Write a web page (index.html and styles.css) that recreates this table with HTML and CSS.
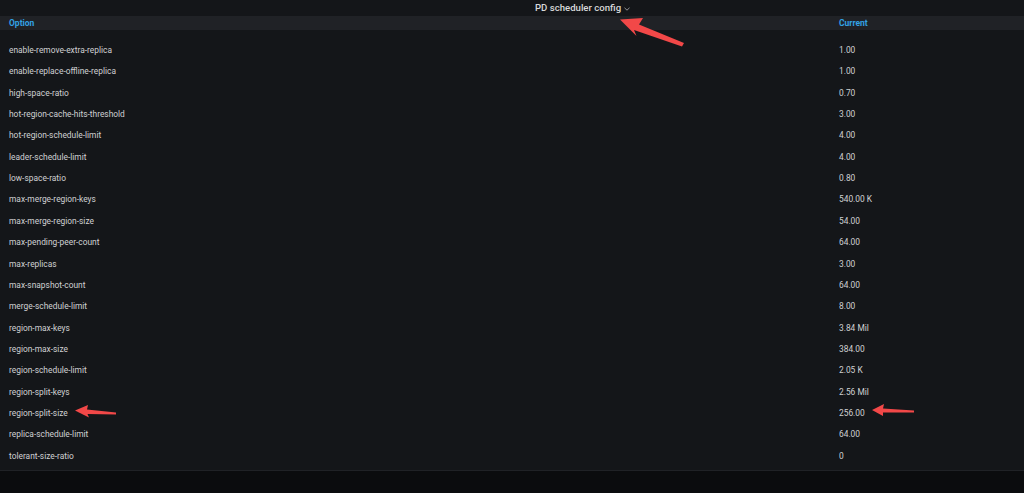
FILE: index.html
```html
<!DOCTYPE html>
<html>
<head>
<meta charset="utf-8">
<link rel="stylesheet" href="styles.css">
</head>
<body>
<div class="panel">
  <div class="panel-title">
    <span class="title-text">PD scheduler config</span>
    <svg class="chev" width="6" height="4" viewBox="0 0 6 4"><path d="M0.5 0.8 L3 3.2 L5.5 0.8" fill="none" stroke="#9fa1a6" stroke-width="0.9"/></svg>
  </div>
  <div class="table">
    <div class="thead">
      <div class="c1">Option</div>
      <div class="c2">Current</div>
    </div>
    <div class="tbody">
      <div class="rows">
        <div class="row"><div class="c1">enable-remove-extra-replica</div><div class="c2">1.00</div></div>
        <div class="row"><div class="c1">enable-replace-offline-replica</div><div class="c2">1.00</div></div>
        <div class="row"><div class="c1">high-space-ratio</div><div class="c2">0.70</div></div>
        <div class="row"><div class="c1">hot-region-cache-hits-threshold</div><div class="c2">3.00</div></div>
        <div class="row"><div class="c1">hot-region-schedule-limit</div><div class="c2">4.00</div></div>
        <div class="row"><div class="c1">leader-schedule-limit</div><div class="c2">4.00</div></div>
        <div class="row"><div class="c1">low-space-ratio</div><div class="c2">0.80</div></div>
        <div class="row"><div class="c1">max-merge-region-keys</div><div class="c2">540.00 K</div></div>
        <div class="row"><div class="c1">max-merge-region-size</div><div class="c2">54.00</div></div>
        <div class="row"><div class="c1">max-pending-peer-count</div><div class="c2">64.00</div></div>
        <div class="row"><div class="c1">max-replicas</div><div class="c2">3.00</div></div>
        <div class="row"><div class="c1">max-snapshot-count</div><div class="c2">64.00</div></div>
        <div class="row"><div class="c1">merge-schedule-limit</div><div class="c2">8.00</div></div>
        <div class="row"><div class="c1">region-max-keys</div><div class="c2">3.84 Mil</div></div>
        <div class="row"><div class="c1">region-max-size</div><div class="c2">384.00</div></div>
        <div class="row"><div class="c1">region-schedule-limit</div><div class="c2">2.05 K</div></div>
        <div class="row"><div class="c1">region-split-keys</div><div class="c2">2.56 Mil</div></div>
        <div class="row"><div class="c1">region-split-size</div><div class="c2">256.00</div></div>
        <div class="row"><div class="c1">replica-schedule-limit</div><div class="c2">64.00</div></div>
        <div class="row"><div class="c1">tolerant-size-ratio</div><div class="c2">0</div></div>
      </div>
    </div>
  </div>
</div>
<svg class="annot" width="1024" height="493" viewBox="0 0 1024 493">
  <polygon points="620,19.5 643,18 639,24.5 684,43 682,46.5 634,30 636.5,36" fill="#f24848"/>
  <polygon points="75,410.5 88,405 87,409.5 116,412.5 116,414.5 87.5,414 89,417.5" fill="#f24848"/>
  <polygon points="872,410 884,404 883,408.5 914,410.5 914,412.5 883,412.5 883,416" fill="#f24848"/>
</svg>
</body>
</html>
```

FILE: styles.css
```css
html, body {
  margin: 0;
  padding: 0;
}
body {
  width: 1024px;
  height: 493px;
  background: #0b0c0e;
  font-family: Roboto, "Liberation Sans", sans-serif;
  overflow: hidden;
  position: relative;
}
.panel {
  background: #141619;
  border-bottom: 1px solid #202226;
  height: 470px;
  display: flex;
  flex-direction: column;
}
.panel-title {
  height: 16px;
  display: flex;
  align-items: center;
  padding-left: 535px;
  gap: 3px;
}
.title-text {
  color: #d8d9da;
  font-size: 9.6px;
  font-weight: 500;
  line-height: 12px;
}
.chev {
  margin-top: 1px;
}
.table {
  flex: 1;
  display: flex;
  flex-direction: column;
  min-height: 0;
}
.thead {
  height: 14px;
  background: #202226;
  display: flex;
  align-items: center;
  color: #33a2e5;
  font-size: 8.5px;
  font-weight: 700;
}
.c1 {
  width: 830px;
  padding-left: 9px;
}
.c2 {
  flex: 1;
}
.tbody {
  flex: 1;
  overflow: hidden;
  min-height: 0;
}
.rows {
  padding-top: 9.3px;
}
.row {
  height: 21.37px;
  display: flex;
  align-items: center;
  color: #d0d1d3;
  font-size: 8.4px;
}
.annot {
  position: absolute;
  left: 0;
  top: 0;
  z-index: 2;
}
```
